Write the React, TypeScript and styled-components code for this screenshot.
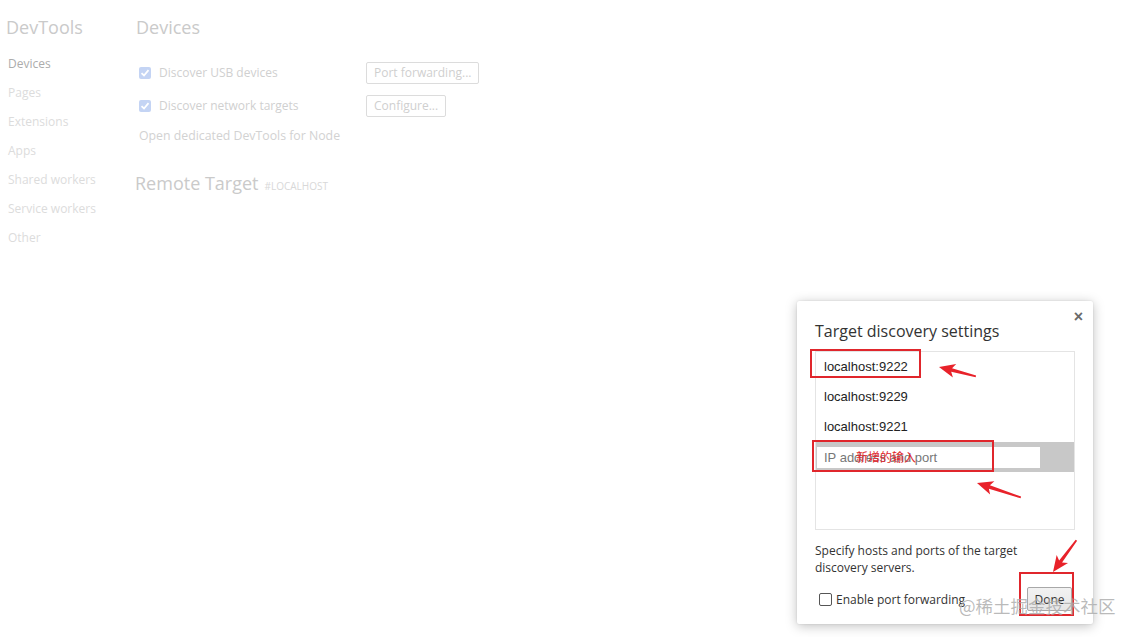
import React from "react";
import styled, { createGlobalStyle } from "styled-components";

const Global = createGlobalStyle`
  html, body { margin: 0; padding: 0; background: #fff; }
  body { font-family: "Open Sans", "Noto Sans", sans-serif; width: 1139px; height: 637px; overflow: hidden; }
  #root { position: relative; width: 1139px; height: 637px; }
`;

const Page = styled.div`
  display: flex;
  width: 1139px;
  height: 637px;
  color: #d2d2d2;
`;

const Sidebar = styled.nav`
  width: 130px;
  padding-left: 6px;
  display: flex;
  flex-direction: column;
`;

const BigTitle = styled.h1`
  margin: 15px 0 0 0;
  font-size: 18px;
  line-height: 24px;
  font-weight: 400;
  color: #cacaca;
`;

const NavList = styled.div`
  margin-top: 15px;
  padding-left: 2px;
  display: flex;
  flex-direction: column;
`;

const NavItem = styled.div<{ $active?: boolean }>`
  height: 29px;
  line-height: 20px;
  font-size: 12px;
  color: ${(p) => (p.$active ? "#acacac" : "#dcdcdc")};
`;

const Main = styled.main`
  display: flex;
  flex-direction: column;
`;

const Heading = styled.h2`
  margin: 15px 0 0 0;
  font-size: 18px;
  line-height: 24px;
  font-weight: 400;
  color: #cacaca;
`;

const Rows = styled.div`
  margin-top: 17px;
  padding-left: 3px;
  display: flex;
  flex-direction: column;
`;

const Row = styled.div`
  display: grid;
  grid-template-columns: 227px auto;
  align-items: center;
  height: 33px;
`;

const CheckLabel = styled.label`
  display: flex;
  align-items: center;
  gap: 8px;
  font-size: 12px;
  color: #d0d0d0;
`;

const FadedBox = styled.span`
  width: 12px;
  height: 12px;
  border-radius: 2px;
  background: #c4d4f4;
  display: inline-flex;
  align-items: center;
  justify-content: center;
`;

const FadedButton = styled.button`
  justify-self: start;
  height: 22px;
  padding: 0 7px;
  border: 1px solid #dcdcdc;
  border-radius: 2px;
  background: #fff;
  color: #cfcfcf;
  font-family: inherit;
  font-size: 12px;
`;

const LinkText = styled.div`
  font-size: 12.3px;
  line-height: 20px;
  margin-top: 4px;
  color: #d2d2d2;
`;

const RemoteHeading = styled.h2`
  margin: 25px 0 0 -1px;
  font-size: 18px;
  line-height: 24px;
  font-weight: 400;
  color: #cacaca;
  display: flex;
  align-items: baseline;
  gap: 6px;
`;

const Hash = styled.span`
  font-size: 10px;
  color: #d8d8d8;
`;

const Dialog = styled.div`
  position: absolute;
  left: 797px;
  top: 301px;
  width: 296px;
  height: 323px;
  box-sizing: border-box;
  background: #fff;
  border-radius: 2px;
  box-shadow: 0 2px 12px rgba(0, 0, 0, 0.25), 0 0 2px rgba(0, 0, 0, 0.12);
  padding: 0 18px;
  display: flex;
  flex-direction: column;
  color: #333;
`;

const Close = styled.div`
  position: absolute;
  right: 10px;
  top: 7px;
  font-family: "Liberation Sans", Arial, sans-serif;
  font-size: 16px;
  font-weight: 700;
  color: #6a6a6a;
`;

const DialogTitle = styled.div`
  margin-top: 19px;
  font-size: 16px;
  line-height: 22px;
  color: #333;
`;

const ListBox = styled.div`
  margin-top: 9px;
  height: 179px;
  box-sizing: border-box;
  border: 1px solid #e4e4e4;
  display: flex;
  flex-direction: column;
`;

const ListItem = styled.div`
  height: 30px;
  flex: none;
  display: flex;
  align-items: center;
  padding-left: 8px;
  padding-bottom: 2px;
  box-sizing: border-box;
  font-family: "Liberation Sans", Arial, sans-serif;
  font-size: 13px;
  color: #222;
`;

const EditRow = styled.div`
  height: 30px;
  flex: none;
  background: #c8c8c8;
  display: flex;
  align-items: center;
  padding-left: 1px;
`;

const Input = styled.div`
  width: 223px;
  height: 21px;
  background: #fff;
  display: flex;
  align-items: center;
  padding-left: 7px;
  box-sizing: border-box;
  font-family: "Liberation Sans", Arial, sans-serif;
  font-size: 13px;
  color: #777;
`;

const Help = styled.div`
  margin-top: 12px;
  font-size: 12px;
  line-height: 17px;
  color: #333;
`;

const Footer = styled.div`
  margin-top: 11px;
  display: flex;
  align-items: center;
  justify-content: space-between;
  padding-left: 4px;
  padding-right: 3px;
`;

const PlainCheck = styled.label`
  display: flex;
  align-items: center;
  gap: 4px;
  font-size: 12px;
  color: #333;
`;

const EmptyBox = styled.span`
  width: 11px;
  height: 11px;
  border: 1px solid #555;
  border-radius: 2px;
  background: #fff;
`;

const DoneButton = styled.button`
  height: 24px;
  width: 45px;
  padding: 0;
  border: 1px solid #a8a8a8;
  border-radius: 2px;
  background: linear-gradient(#f2f2f2, #e6e6e6);
  font-family: "Open Sans", sans-serif;
  font-size: 12px;
  color: #333;
`;

const Annot = styled.div<{ $l: number; $t: number; $w: number; $h: number }>`
  position: absolute;
  left: ${(p) => p.$l}px;
  top: ${(p) => p.$t}px;
  width: ${(p) => p.$w}px;
  height: ${(p) => p.$h}px;
  box-sizing: border-box;
  border: 2px solid #e0262c;
`;

const RedNote = styled.div`
  position: absolute;
  left: 856px;
  top: 448px;
  font-family: "Noto Sans CJK SC", sans-serif;
  font-size: 12px;
  line-height: 18px;
  color: #e0262c;
`;

const Watermark = styled.div`
  position: absolute;
  left: 959px;
  top: 594px;
  font-family: "Noto Sans CJK SC", sans-serif;
  font-size: 17.5px;
  line-height: 24px;
  color: rgba(140, 140, 140, 0.6);
  text-shadow: 0 0 1px rgba(255, 255, 255, 0.6);
`;

const ArrowSvg = styled.svg`
  position: absolute;
  left: 0;
  top: 0;
  pointer-events: none;
`;

const Check = () => (
  <svg width="10" height="10" viewBox="0 0 10 10">
    <path d="M1.5 5.2 L4 7.5 L8.5 2.2" stroke="#fff" strokeWidth="1.8" fill="none" />
  </svg>
);

const Arrow = ({ hx, hy, tx, ty }: { hx: number; hy: number; tx: number; ty: number }) => {
  const dx = tx - hx;
  const dy = ty - hy;
  const len = Math.hypot(dx, dy);
  const ux = dx / len;
  const uy = dy / len;
  const px = -uy;
  const py = ux;
  const hl = 16;
  const hw = 7;
  const bx = hx + ux * hl;
  const by = hy + uy * hl;
  const nx = bx - ux * 3;
  const ny = by - uy * 3;
  const head = `${hx},${hy} ${bx + px * hw},${by + py * hw} ${nx + px * 1.8},${ny + py * 1.8} ${tx + px * 1.4},${ty + py * 1.4} ${tx - px * 0.4},${ty - py * 0.4} ${nx - px * 1.8},${ny - py * 1.8} ${bx - px * hw},${by - py * hw}`;
  return <polygon points={head} fill="#e8222a" />;
};

export default function App() {
  return (
    <>
      <Global />
      <Page>
        <Sidebar>
          <BigTitle>DevTools</BigTitle>
          <NavList>
            <NavItem $active>Devices</NavItem>
            <NavItem>Pages</NavItem>
            <NavItem>Extensions</NavItem>
            <NavItem>Apps</NavItem>
            <NavItem>Shared workers</NavItem>
            <NavItem>Service workers</NavItem>
            <NavItem>Other</NavItem>
          </NavList>
        </Sidebar>
        <Main>
          <Heading>Devices</Heading>
          <Rows>
            <Row>
              <CheckLabel>
                <FadedBox>
                  <Check />
                </FadedBox>
                Discover USB devices
              </CheckLabel>
              <FadedButton>Port forwarding...</FadedButton>
            </Row>
            <Row>
              <CheckLabel>
                <FadedBox>
                  <Check />
                </FadedBox>
                Discover network targets
              </CheckLabel>
              <FadedButton>Configure...</FadedButton>
            </Row>
            <LinkText>Open dedicated DevTools for Node</LinkText>
          </Rows>
          <RemoteHeading>
            Remote Target <Hash>#LOCALHOST</Hash>
          </RemoteHeading>
        </Main>
      </Page>

      <Dialog>
        <Close>×</Close>
        <DialogTitle>Target discovery settings</DialogTitle>
        <ListBox>
          <ListItem>localhost:9222</ListItem>
          <ListItem>localhost:9229</ListItem>
          <ListItem>localhost:9221</ListItem>
          <EditRow>
            <Input>IP address and port</Input>
          </EditRow>
        </ListBox>
        <Help>
          Specify hosts and ports of the target
          <br />
          discovery servers.
        </Help>
        <Footer>
          <PlainCheck>
            <EmptyBox />
            Enable port forwarding
          </PlainCheck>
          <DoneButton>Done</DoneButton>
        </Footer>
      </Dialog>

      <Annot $l={810} $t={349} $w={111} $h={29} />
      <Annot $l={812} $t={440} $w={182} $h={32} />
      <Annot $l={1019} $t={572} $w={55} $h={44} />
      <RedNote>新增的输入</RedNote>
      <Watermark>@稀土掘金技术社区</Watermark>

      <ArrowSvg width="1139" height="637">
        <Arrow hx={939} hy={367} tx={976} ty={376} />
        <Arrow hx={977} hy={483} tx={1021} ty={497} />
        <Arrow hx={1053} hy={572} tx={1076} ty={540} />
      </ArrowSvg>
    </>
  );
}
